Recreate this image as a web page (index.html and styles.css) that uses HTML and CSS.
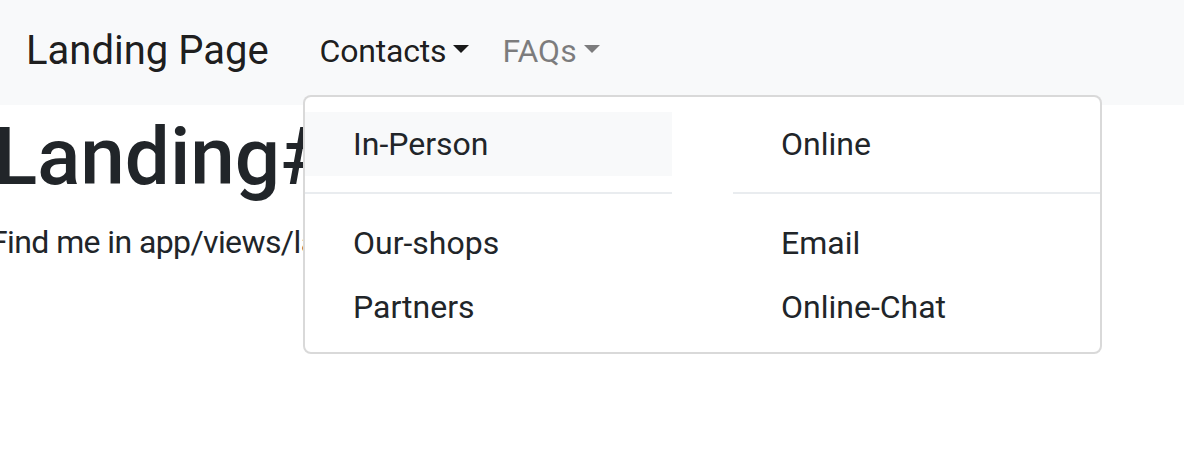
FILE: index.html
```html
<!DOCTYPE html>
<html lang="en">
<head>
<meta charset="utf-8">
<title>Landing Page</title>
<link rel="stylesheet" href="styles.css">
</head>
<body>
<nav class="navbar">
  <a class="brand" href="#">Landing Page</a>
  <ul class="nav">
    <li class="nav-item dropdown">
      <a class="nav-link active" href="#">Contacts<span class="caret"></span></a>
      <div class="dropdown-menu">
        <div class="dd-col">
          <a class="dd-item hover" href="#">In-Person</a>
          <div class="dd-divider"></div>
          <a class="dd-item" href="#">Our-shops</a>
          <a class="dd-item" href="#">Partners</a>
        </div>
        <div class="dd-col">
          <a class="dd-item" href="#">Online</a>
          <div class="dd-divider"></div>
          <a class="dd-item" href="#">Email</a>
          <a class="dd-item" href="#">Online-Chat</a>
        </div>
      </div>
    </li>
    <li class="nav-item">
      <a class="nav-link muted" href="#">FAQs<span class="caret"></span></a>
    </li>
  </ul>
</nav>
<main class="content">
  <h1 class="title">Landing#index</h1>
  <p class="lead-text">Find me in app/views/landing/index.html.erb</p>
</main>
</body>
</html>
```
FILE: styles.css
```css
* { box-sizing: border-box; }
html, body { margin: 0; padding: 0; }
body {
  font-family: Roboto, "Liberation Sans", sans-serif;
  color: #212529;
  background: #fff;
  overflow: hidden;
  width: 1184px;
  height: 460px;
}
a { text-decoration: none; }

.navbar {
  display: flex;
  align-items: flex-start;
  height: 105px;
  padding: 0 0 0 26px;
  background: #f8f9fa;
  position: relative;
}
.brand {
  margin-top: 21px;
  font-size: 40px;
  line-height: 60px;
  color: rgba(0, 0, 0, 0.9);
  margin-right: 51px;
}
.nav {
  display: flex;
  list-style: none;
  margin: 27px 0 0;
  padding: 0;
  gap: 33px;
}
.nav-item { position: static; }
.nav-link {
  display: inline-flex;
  align-items: baseline;
  font-size: 32px;
  line-height: 48px;
}
.nav-link.active { color: rgba(0, 0, 0, 0.9); letter-spacing: -0.2px; }
.nav-link.muted { color: rgba(0, 0, 0, 0.5); }
.caret {
  display: inline-block;
  width: 0;
  height: 0;
  margin-left: 7px;
  border-top: 8px solid currentColor;
  border-left: 8px solid transparent;
  border-right: 8px solid transparent;
  position: relative;
  top: -9px;
}

.dropdown-menu {
  position: absolute;
  left: 303px;
  top: 95px;
  width: 799px;
  z-index: 10;
  background: #fff;
  border: 2px solid rgba(0, 0, 0, 0.15);
  border-radius: 8px;
  padding: 15px 0 13px;
  display: grid;
  grid-template-columns: 367px 367px;
  column-gap: 61px;
  letter-spacing: 0;
}
.dd-col { display: flex; flex-direction: column; }
.dd-item {
  display: block;
  padding: 8px 48px;
  font-size: 32px;
  line-height: 48px;
  color: #212529;
  white-space: nowrap;
}
.dd-item.hover { background: #f8f9fa; }
.dd-divider {
  height: 0;
  margin: 16px 0 17px;
  border-top: 2px solid #e9ecef;
}

.content {
  margin-left: -6px;
  padding-top: 4px;
  white-space: nowrap;
}
.title {
  margin: 0 0 13px;
  font-size: 80px;
  font-weight: 500;
  line-height: 96px;
}
.lead-text {
  margin: 0 0 0 -4px;
  font-size: 32px;
  line-height: 48px;
  letter-spacing: -0.6px;
}
```
